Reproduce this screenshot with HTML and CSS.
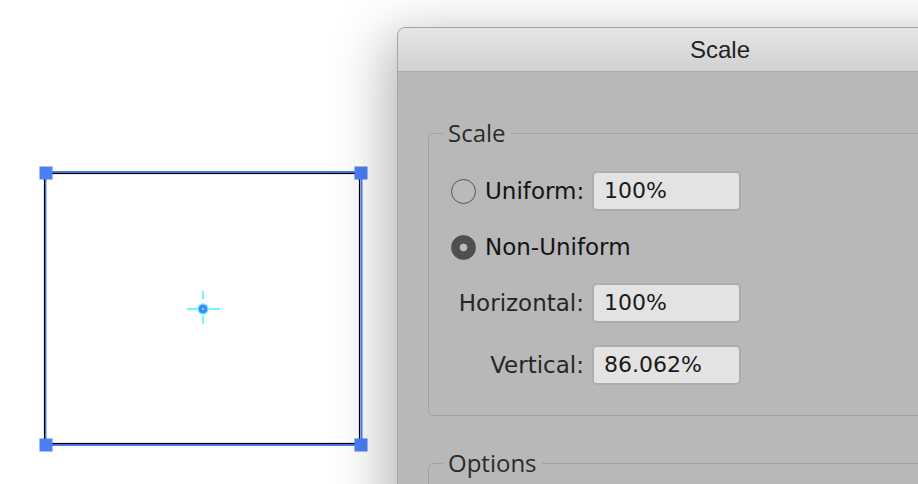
FILE: index.html
```html
<!DOCTYPE html>
<html>
<head>
<meta charset="utf-8">
<link rel="stylesheet" href="styles.css">
</head>
<body>
<div class="stage">
  <div class="canvas">
    <svg width="397" height="484" viewBox="0 0 397 484">
      <rect x="45.5" y="172" width="316" height="273" fill="none" stroke="#4d7df2" stroke-width="2"/>
      <rect x="44.5" y="173.5" width="315" height="270" fill="none" stroke="#000" stroke-width="1.2"/>
      <rect x="39.5" y="166.5" width="13" height="13" fill="#4b7ff6"/>
      <rect x="354.5" y="166.5" width="13" height="13" fill="#4b7ff6"/>
      <rect x="39.5" y="438.5" width="13" height="13" fill="#4b7ff6"/>
      <rect x="354.5" y="438.5" width="13" height="13" fill="#4b7ff6"/>
      <g stroke="#4ff6f6" stroke-width="1.6">
        <line x1="203" y1="291" x2="203" y2="299"/>
        <line x1="203" y1="316" x2="203" y2="324"/>
        <line x1="187" y1="309" x2="197" y2="309"/>
        <line x1="209" y1="309" x2="220" y2="309"/>
      </g>
      <circle cx="203" cy="309" r="5" fill="#4b7ff6" stroke="#4ff6f6" stroke-width="1.4"/>
      <circle cx="203" cy="309" r="1" fill="#9ff"/>
    </svg>
  </div>
  <div class="dialog">
    <div class="titlebar">Scale</div>
    <div class="content">
      <fieldset class="group">
        <legend class="legend">Scale</legend>
        <div class="row row-first">
          <div class="label choice"><span class="radio"></span>Uniform:</div>
          <div class="field">100%</div>
        </div>
        <div class="row row-radio">
          <div class="choice"><span class="radio checked"></span>Non-Uniform</div>
        </div>
        <div class="row row-h">
          <div class="label right">Horizontal:</div>
          <div class="field">100%</div>
        </div>
        <div class="row row-v">
          <div class="label right">Vertical:</div>
          <div class="field">86.062%</div>
        </div>
      </fieldset>
      <fieldset class="group options">
        <legend class="legend">Options</legend>
        <div class="spacer"></div>
      </fieldset>
    </div>
  </div>
</div>
</body>
</html>
```
FILE: styles.css
```css
html, body {
  margin: 0;
  padding: 0;
  background: #ffffff;
  overflow: hidden;
}
.stage {
  display: flex;
  width: 918px;
  height: 484px;
  overflow: hidden;
  font-family: "DejaVu Sans", sans-serif;
}
.canvas {
  flex: 0 0 397px;
}
.canvas svg {
  display: block;
}
.dialog {
  flex: 0 0 646px;
  position: relative;
  box-sizing: border-box;
  margin-top: 27px;
  height: 520px;
  background: #b8b8b8;
  border: 1px solid #a4a4a4;
  border-radius: 8px 8px 0 0;
  box-shadow: -6px 14px 55px 4px rgba(0, 0, 0, 0.3);
}
.titlebar {
  height: 43px;
  line-height: 43px;
  text-align: center;
  border-bottom: 1px solid #a9a9a9;
  border-radius: 7px 7px 0 0;
  background: linear-gradient(#e6e5e6, #d2d1d2);
  font-family: "Liberation Sans", Arial, sans-serif;
  font-size: 24px;
  color: #222222;
}
.content {
  padding: 48px 0 0 30px;
}
.group {
  margin: 0;
  min-width: 0;
  border: 1px solid #a2a2a2;
  border-radius: 5px;
  padding: 0 0 30px 22px;
}
.legend {
  font-family: "Open Sans", sans-serif;
  font-size: 24px;
  line-height: 26px;
  padding: 0 5px;
  margin-left: -8px;
  color: #2b2b2b;
}
.row {
  display: flex;
  align-items: center;
  height: 40px;
  font-size: 23px;
  color: #141414;
}
.row-first { margin-top: 25px; }
.row-radio { margin-top: 18px; height: 36px; }
.row-h { margin-top: 18px; }
.row-v { margin-top: 22px; }
.label {
  width: 133px;
  margin-right: 8px;
  white-space: nowrap;
}
.right {
  text-align: right;
  color: #262626;
}
.choice {
  display: flex;
  align-items: center;
  white-space: nowrap;
}
.radio {
  box-sizing: border-box;
  width: 25px;
  height: 25px;
  margin-right: 9px;
  border-radius: 50%;
  border: 1.3px solid #555555;
  background: #bababa;
  flex: 0 0 auto;
}
.radio.checked {
  background: radial-gradient(circle, #bcbcbc 0 3.5px, #4f4f4f 4.2px);
  border-color: #4f4f4f;
}
.field {
  box-sizing: border-box;
  width: 149px;
  height: 40px;
  line-height: 36px;
  padding-left: 10px;
  background: #e3e3e3;
  border: 2px solid #adadad;
  border-radius: 5px;
  font-size: 22px;
  color: #1a1a1a;
}
.options {
  margin-top: 34px;
  padding-bottom: 0;
}
.spacer {
  height: 60px;
}
```
